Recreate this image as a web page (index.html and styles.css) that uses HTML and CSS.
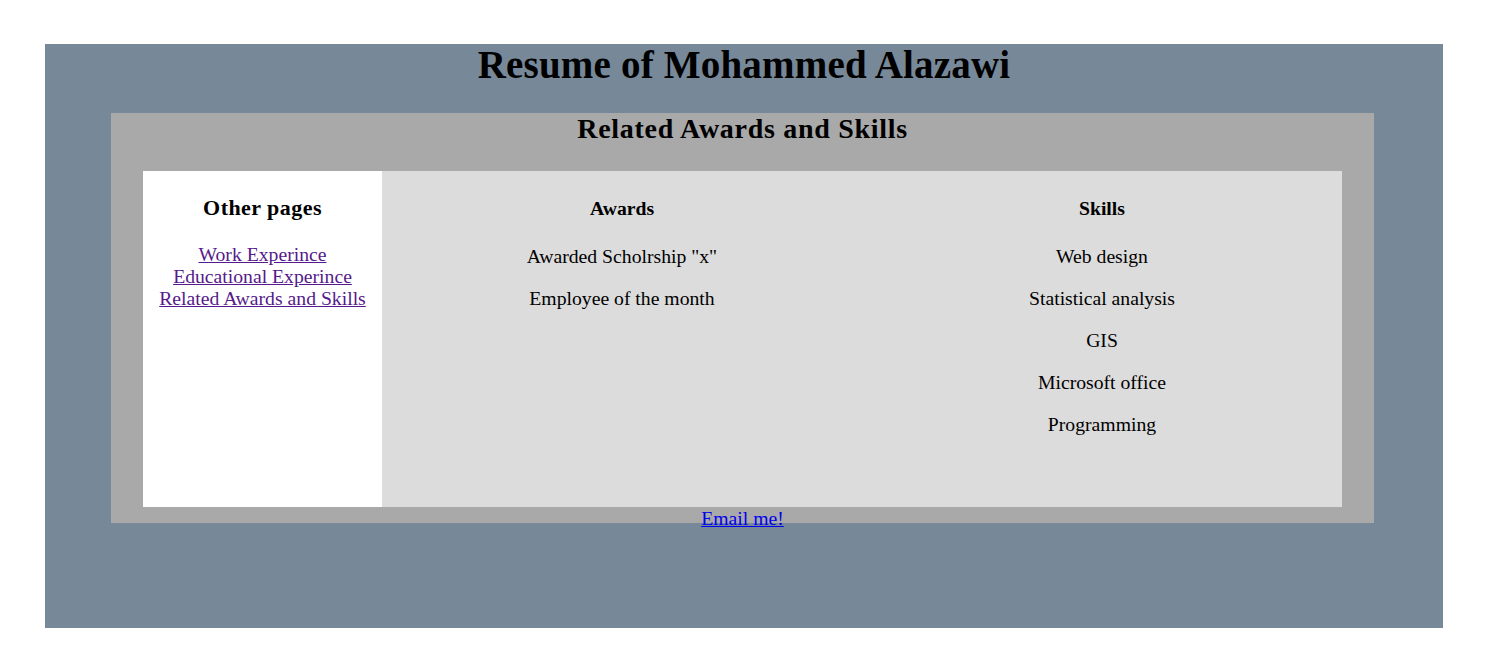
FILE: index.html
```html
<!DOCTYPE html>
<html>
<head>
<meta charset="utf-8">
<title>Resume of Mohammed Alazawi</title>
<link rel="stylesheet" href="styles.css">
</head>
<body>
<div class="page">
  <h1 class="title">Resume of Mohammed Alazawi</h1>
  <div class="section">
    <h2 class="section-title">Related Awards and Skills</h2>
    <div class="grid">
      <div class="nav">
        <h3 class="nav-title">Other pages</h3>
        <div class="nav-links">
          <a href="#" class="visited">Work Experince</a>
          <a href="#" class="visited">Educational Experince</a>
          <a href="#" class="visited">Related Awards and Skills</a>
        </div>
      </div>
      <div class="content">
        <div class="col">
          <h4 class="col-title">Awards</h4>
          <p class="item">Awarded Scholrship "x"</p>
          <p class="item">Employee of the month</p>
        </div>
        <div class="col">
          <h4 class="col-title">Skills</h4>
          <p class="item">Web design</p>
          <p class="item">Statistical analysis</p>
          <p class="item">GIS</p>
          <p class="item">Microsoft office</p>
          <p class="item">Programming</p>
        </div>
      </div>
    </div>
    <div class="footer"><a href="#" class="email">Email me!</a></div>
  </div>
</div>
</body>
</html>
```
FILE: styles.css
```css
html, body {
  margin: 0;
  padding: 0;
  background: #ffffff;
  font-family: "Liberation Serif", "Times New Roman", serif;
  color: #000000;
}
.page {
  margin: 44px 55px 0 45px;
  height: 584px;
  background: #778899;
  display: flex;
  flex-direction: column;
  align-items: center;
}
.title {
  margin: 0;
  font-size: 39px;
  letter-spacing: 0.2px;
  line-height: 42px;
  font-weight: bold;
  text-align: center;
  height: 69px;
  flex-shrink: 0;
}
.section {
  width: 1263px;
  height: 410px;
  margin-left: -3px;
  background: #a9a9a9;
  display: flex;
  flex-direction: column;
  flex-shrink: 0;
}
.section-title {
  margin: 0;
  font-size: 28px;
  letter-spacing: 0.7px;
  line-height: 32px;
  height: 58px;
  text-align: center;
  flex-shrink: 0;
}
.grid {
  margin: 0 32px;
  height: 336px;
  display: flex;
  flex-shrink: 0;
}
.nav {
  width: 239px;
  background: #ffffff;
  text-align: center;
}
.nav-title {
  margin: 24px 0 0;
  font-size: 22px;
  letter-spacing: 0.45px;
  line-height: 26px;
}
.nav-links {
  margin-top: 22px;
  display: flex;
  flex-direction: column;
  font-size: 19.7px;
  line-height: 22px;
}
.nav-links a {
  color: #551a8b;
}
.content {
  flex: 1;
  background: #dcdcdc;
  display: flex;
}
.col {
  flex: 1;
  text-align: center;
}
.col-title {
  margin: 26px 0 26px;
  font-size: 19.7px;
  line-height: 22px;
}
.item {
  margin: 20px 0 0;
  font-size: 19.7px;
  line-height: 22px;
}
.footer {
  text-align: center;
  font-size: 19.7px;
  line-height: 22px;
  flex-shrink: 0;
}
.email {
  color: #0000ee;
}
```
